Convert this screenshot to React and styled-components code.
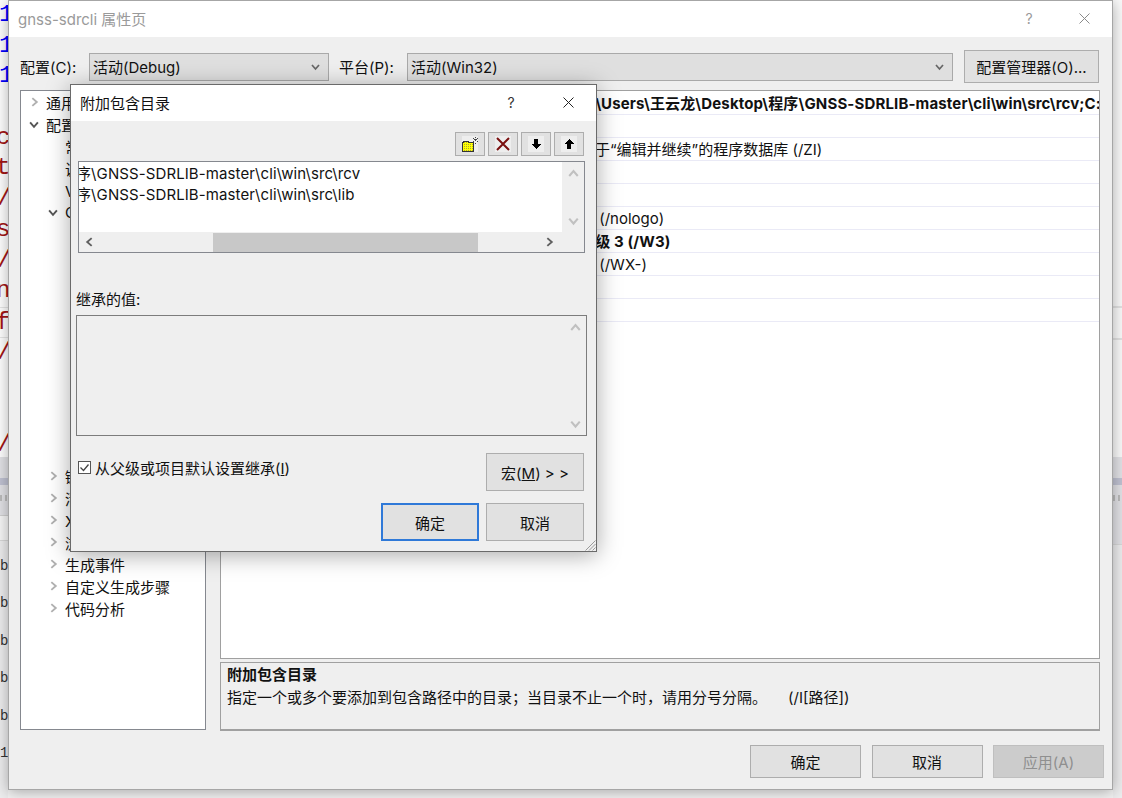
import styled, { createGlobalStyle } from "styled-components";

const GlobalStyle = createGlobalStyle`
  html, body {
    margin: 0;
    padding: 0;
    background: #f4f4f4;
  }
  body {
    font-family: Inter, "Noto Sans CJK SC", sans-serif;
    font-size: 15px;
    color: #111;
  }
`;

const Desktop = styled.div`
  position: relative;
  width: 1122px;
  height: 798px;
  overflow: hidden;
  display: flex;
  justify-content: space-between;
`;

const Strip = styled.div`
  width: ${(p) => p.$width}px;
  overflow: hidden;
  display: flex;
  flex-direction: column;
  background: #ececee;
`;

const CodePane = styled.div`
  height: 457px;
  flex: none;
  background: #fff;
  font-family: "Liberation Mono", monospace;
  font-size: 24px;
`;

const CodeLine = styled.div`
  height: 30.7px;
  line-height: 30.7px;
  margin-left: ${(p) => p.$shift}px;
  color: ${(p) => p.$color};
  box-sizing: border-box;
  ${(p) => p.$current && "border-top: 1px solid #e6e6e6; border-bottom: 1px solid #e6e6e6;"}
`;

const RightPane = styled.div`
  height: 457px;
  flex: none;
  background: #fafafa;
  padding-top: 306px;
  box-sizing: border-box;
`;

const CurrentLine = styled.div`
  height: 30px;
  border-top: 2px solid #e2e2e2;
  border-bottom: 2px solid #e2e2e2;
`;

const Splitter = styled.div`
  height: ${(p) => p.$height}px;
  flex: none;
  background: #e2e2e6;
  display: flex;
  flex-direction: column;
  padding-top: 21px;
  box-sizing: border-box;
`;

const SplitterBand = styled.div`
  height: 7px;
  background: #c0c2d2;
`;

const SplitterDots = styled.div`
  height: 6px;
  margin-top: 10px;
  background: repeating-linear-gradient(90deg, #bbb 0 2px, transparent 2px 5px);
`;

const PanelHeader = styled.div`
  height: 24px;
  flex: none;
  background: #f7f7f7;
  border-top: 1px solid #d0d0d0;
`;

const OutputPane = styled.div`
  flex: 1;
  padding-top: 7px;
  background: #ededee;
  border-top: 1px solid #d8d8d8;
  font-family: "Liberation Mono", monospace;
  font-size: 14px;
  color: #333;
`;

const OutputLine = styled.div`
  height: 37.4px;
  line-height: 37.4px;
  white-space: nowrap;
`;

const Window = styled.section`
  position: absolute;
  left: ${(p) => p.$left}px;
  top: ${(p) => p.$top}px;
  width: ${(p) => p.$width}px;
  height: ${(p) => p.$height}px;
  box-sizing: border-box;
  display: flex;
  flex-direction: column;
  background: #efefef;
  border: 1px solid ${(p) => p.$border};
  box-shadow: ${(p) => p.$shadow};
`;

const TitleBar = styled.header`
  height: ${(p) => p.$height}px;
  flex: none;
  box-sizing: border-box;
  background: #fff;
  display: flex;
  align-items: center;
  padding: 0 0 2px ${(p) => p.$pad}px;
  color: ${(p) => p.$color};
`;

const TitleText = styled.span`
  flex: 1;
`;

const HelpMark = styled.span`
  width: ${(p) => p.$width}px;
  text-align: center;
  font-size: 14px;
  color: ${(p) => p.$color};
`;

const CloseMark = styled.svg`
  width: 11px;
  height: 11px;
  margin: ${(p) => p.$margin};
  stroke: ${(p) => p.$color};
  stroke-width: 1;
  fill: none;
`;

const MainBody = styled.div`
  flex: 1;
  padding: 13px 12px 0 11px;
  display: flex;
  flex-direction: column;
`;

const ConfigRow = styled.div`
  height: 33px;
  flex: none;
  display: flex;
  align-items: center;
`;

const ConfigLabel = styled.span`
  width: ${(p) => p.$width}px;
  flex: none;
`;

const Combo = styled.div`
  width: ${(p) => p.$width}px;
  height: 28px;
  flex: none;
  box-sizing: border-box;
  margin-right: 10px;
  padding: 0 8px 0 3px;
  display: flex;
  align-items: center;
  justify-content: space-between;
  background: #dfdfdf;
  border: 1px solid #a9a9a9;
`;

const Button = styled.button`
  width: ${(p) => p.$width}px;
  height: ${(p) => p.$height}px;
  flex: none;
  box-sizing: border-box;
  padding: 0;
  font: inherit;
  color: ${(p) => (p.$disabled ? "#8f8f8f" : "#111")};
  background: ${(p) => (p.$disabled ? "#cccccc" : "#e1e1e1")};
  border: ${(p) => (p.$primary ? "2px solid #2f79d8" : p.$disabled ? "1px solid #bfbfbf" : "1px solid #adadad")};
  outline: none;
`;

const ManagerButton = styled(Button)`
  margin-left: auto;
  margin-right: 1px;
`;

const Content = styled.div`
  height: 640px;
  flex: none;
  margin-top: 7px;
  display: flex;
  gap: 14px;
`;

const TreePanel = styled.nav`
  width: 186px;
  flex: none;
  box-sizing: border-box;
  background: #fff;
  border: 1px solid #85888f;
  overflow: hidden;
`;

const TreeRow = styled.div`
  height: 22px;
  display: flex;
  align-items: center;
  white-space: nowrap;
  padding-left: ${(p) => p.$indent}px;
`;

const TreeArrow = styled.span`
  width: 12px;
  flex: none;
  margin-right: 6px;
  display: flex;
  justify-content: center;
`;

const RightColumn = styled.div`
  flex: 1;
  display: flex;
  flex-direction: column;
  gap: 3px;
  min-width: 0;
`;

const PropertyGrid = styled.div`
  height: 569px;
  flex: none;
  box-sizing: border-box;
  padding-top: 1px;
  background: #fff;
  border: 1px solid #a0a0a0;
  overflow: hidden;
`;

const PropertyRow = styled.div`
  height: 23px;
  box-sizing: border-box;
  padding: 0 0 2px 359px;
  display: flex;
  align-items: center;
  white-space: nowrap;
  overflow: hidden;
  border-bottom: 1px solid #eaeaf6;
  font-weight: ${(p) => (p.$bold ? 700 : 400)};
  letter-spacing: ${(p) => (p.$bold ? "0.14px" : "0")};
`;

const Description = styled.div`
  height: 69px;
  flex: none;
  box-sizing: border-box;
  padding: 0 6px;
  border: 1px solid #a0a0a0;
  border-bottom-width: 2px;
`;

const DescriptionTitle = styled.div`
  font-weight: 700;
  height: 23px;
  line-height: 23px;
`;

const DescriptionText = styled.div`
  height: 23px;
  line-height: 23px;
  white-space: pre;
`;

const Footer = styled.div`
  display: flex;
  justify-content: flex-end;
  gap: ${(p) => p.$gap}px;
  margin: ${(p) => p.$margin};
`;

const DialogBody = styled.div`
  flex: 1;
  padding: 11px 11px 0 7px;
  display: flex;
  flex-direction: column;
`;

const IconBar = styled.div`
  display: flex;
  justify-content: flex-end;
  gap: 3px;
  margin-right: 1px;
`;

const IconButton = styled.button`
  width: 30px;
  height: 24px;
  padding: 0;
  box-sizing: border-box;
  display: flex;
  align-items: center;
  justify-content: center;
  background: #e1e1e1;
  border: 1px solid #adadad;
`;

const IconFace = styled.svg`
  width: 16px;
  height: 16px;
  background: #eeeeee;
  shape-rendering: ${(p) => (p.$smooth ? "auto" : "crispEdges")};
`;

const ListBox = styled.div`
  height: 92px;
  flex: none;
  margin-top: 5px;
  box-sizing: border-box;
  display: grid;
  grid-template-columns: 1fr 22px;
  grid-template-rows: 1fr 20px;
  border: 1px solid #85888f;
  background: #efefef;
`;

const ListItems = styled.div`
  background: #fff;
  overflow: hidden;
  padding-top: 1px;
`;

const ListItem = styled.div`
  height: 21px;
  line-height: 21px;
  white-space: nowrap;
  margin-left: -3px;
  letter-spacing: 0.1px;
`;

const VerticalBar = styled.div`
  display: flex;
  flex-direction: column;
  align-items: center;
  justify-content: space-between;
  padding: ${(p) => p.$pad};
  background: #efefef;
`;

const HorizontalBar = styled.div`
  display: flex;
  align-items: center;
  background: #efefef;
  padding: 0 8px 0 6px;
`;

const Thumb = styled.div`
  width: 265px;
  height: 19px;
  margin-left: 118px;
  margin-right: auto;
  background: #c8c8c8;
`;

const FieldLabel = styled.div`
  height: 20px;
  line-height: 20px;
  margin: 37px 0 5px -2px;
`;

const InheritedBox = styled.div`
  height: 121px;
  flex: none;
  width: 511px;
  margin-left: -2px;
  box-sizing: border-box;
  display: flex;
  justify-content: flex-end;
  border: 1px solid #7c7c7c;
`;

const InheritedBar = styled(VerticalBar)`
  width: 22px;
  box-sizing: border-box;
`;

const OptionRow = styled.div`
  margin-top: 17px;
  display: flex;
  justify-content: space-between;
  align-items: flex-start;
  margin-right: 1px;
`;

const CheckLabel = styled.label`
  height: 28px;
  display: flex;
  align-items: center;
  gap: 4px;
`;

const CheckBox = styled.span`
  width: 13px;
  height: 13px;
  box-sizing: border-box;
  display: flex;
  background: #fff;
  border: 1px solid #555;
`;

const Underlined = styled.span`
  text-decoration: underline;
`;

const Grip = styled.svg`
  position: absolute;
  right: 0;
  bottom: 0;
  width: 12px;
  height: 12px;
  stroke: #9a9a9a;
  stroke-width: 1;
`;

const Chevron = ({ dir, color, size = 9 }) => {
  const paths = {
    right: "M3 1l4 3.5L3 8",
    left: "M6 1L2 4.5 6 8",
    down: "M1 3l3.5 4L8 3",
    up: "M1 6.5L4.5 2.5 8 6.5",
  };
  return (
    <svg width={size} height={size} viewBox="0 0 9 9" fill="none" stroke={color} strokeWidth="1.7">
      <path d={paths[dir]} />
    </svg>
  );
};

const Close = ({ color, margin }) => (
  <CloseMark viewBox="0 0 11 11" $color={color} $margin={margin}>
    <path d="M.5.5l10 10M10.5.5l-10 10" />
  </CloseMark>
);

const NewFolderIcon = () => (
  <IconFace viewBox="0 0 16 16">
    <defs>
      <pattern id="dither" width="2" height="2" patternUnits="userSpaceOnUse">
        <rect width="2" height="2" fill="#ffff00" />
        <rect width="1" height="1" fill="#a8a830" />
      </pattern>
    </defs>
    <path d="M.5 6.500h1v-1h5v1h5v8.500H.5z" fill="url(#dither)" stroke="#333" />
    <path d="M13 1h1v1h-1zM11 2h1v1h-1zM15 2h1v1h-1zM13 4h1v1h-1zM11 5h1v1h-1zM15 5h1v1h-1zM13 7h1v1h-1zM12 3h3v1h-3z" fill="#444" />
  </IconFace>
);

const DeleteIcon = () => (
  <IconFace viewBox="0 0 16 16" $smooth>
    <path d="M2 2l12 12M14 2L2 14" stroke="#7a1010" strokeWidth="2" />
  </IconFace>
);

const ArrowIcon = ({ up }) => (
  <IconFace viewBox="0 0 16 16">
    <path d={up ? "M8 3l5 5h-3v5H6V8H3z" : "M6 3h4v5h3l-5 5-5-5h3z"} fill="#000" />
  </IconFace>
);

const codeLines = [
  ["1", "#0000ff", -1],
  ["1", "#0000ff", -1],
  ["1", "#0000ff", -1],
  ["", "#000", 0],
  ["c", "#a31515", -4],
  ["t", "#a31515", -4],
  ["/", "#a31515", -3],
  ["s", "#a31515", -4],
  ["/", "#a31515", -3],
  ["n", "#a31515", -4],
  ["f", "#a31515", -4, true],
  ["/", "#a31515", -3],
  ["", "#000", 0],
  ["", "#000", 0],
  ["/", "#a31515", -3],
];

// rows with no label are covered by the dialog in the picture
const treeRows = [
  { label: "通用属性", indent: 7, arrow: "right" },
  { label: "配置属性", indent: 7, arrow: "down" },
  { label: "常规", indent: 44 },
  { label: "调试", indent: 44 },
  { label: "VC++ 目录", indent: 44 },
  { label: "C/C++", indent: 26, arrow: "down" },
  ...Array.from({ length: 11 }, () => ({ label: "", indent: 0 })),
  { label: "链接器", indent: 26, arrow: "right" },
  { label: "清单工具", indent: 26, arrow: "right" },
  { label: "XML 文档生成器", indent: 26, arrow: "right" },
  { label: "浏览信息", indent: 26, arrow: "right" },
  { label: "生成事件", indent: 26, arrow: "right" },
  { label: "自定义生成步骤", indent: 26, arrow: "right" },
  { label: "代码分析", indent: 26, arrow: "right" },
];

const properties = [
  { value: "C:\\Users\\王云龙\\Desktop\\程序\\GNSS-SDRLIB-master\\cli\\win\\src\\rcv;C:\\Users\\王云龙\\Desktop\\程序", bold: true },
  { value: "" },
  { value: "用于“编辑并继续”的程序数据库 (/ZI)" },
  { value: "" },
  { value: "" },
  { value: "是 (/nologo)" },
  { value: "等级 3 (/W3)", bold: true },
  { value: "否 (/WX-)" },
  { value: "" },
  { value: "" },
];

const App = () => {
  return (
    <Desktop>
      <GlobalStyle />
      <Strip $width={8}>
        <CodePane>
          {codeLines.map(([text, color, shift, current], i) => (
            <CodeLine key={i} $color={color} $shift={shift} $current={current}>
              {text}
            </CodeLine>
          ))}
        </CodePane>
        <Splitter $height={58}>
          <SplitterBand />
          <SplitterDots />
        </Splitter>
        <PanelHeader />
        <OutputPane>
          {["b-", "b-", "b-", "b-", "b-", "1"].map((t, i) => (
            <OutputLine key={i}>{t}</OutputLine>
          ))}
        </OutputPane>
      </Strip>
      <Strip $width={9}>
        <RightPane>
          <CurrentLine />
        </RightPane>
        <Splitter $height={87}>
          <SplitterBand />
          <SplitterDots />
        </Splitter>
        <OutputPane />
      </Strip>

      <Window $left={8} $top={0} $width={1105} $height={790} $border="#a6a6a6" $shadow="0 2px 14px rgba(0,0,0,0.32)">
        <TitleBar $height={36} $pad={9} $color="#9a9a9a">
          <TitleText>gnss-sdrcli 属性页</TitleText>
          <HelpMark $width={16} $color="#9a9a9a">?</HelpMark>
          <Close color="#8a8a8a" margin="0 22px 0 42px" />
        </TitleBar>
        <MainBody>
          <ConfigRow>
            <ConfigLabel $width={69}>配置(C):</ConfigLabel>
            <Combo $width={240}>
              活动(Debug)
              <Chevron dir="down" color="#666" />
            </Combo>
            <ConfigLabel $width={68}>平台(P):</ConfigLabel>
            <Combo $width={546}>
              活动(Win32)
              <Chevron dir="down" color="#666" />
            </Combo>
            <ManagerButton $width={135} $height={33}>配置管理器(O)...</ManagerButton>
          </ConfigRow>
          <Content>
            <TreePanel>
              {treeRows.map((row, i) => (
                <TreeRow key={i} $indent={row.indent}>
                  {row.arrow ? (
                    <TreeArrow>
                      <Chevron dir={row.arrow} color={row.arrow === "down" ? "#555" : "#b0b0b0"} size={10} />
                    </TreeArrow>
                  ) : null}
                  {row.label}
                </TreeRow>
              ))}
            </TreePanel>
            <RightColumn>
              <PropertyGrid>
                {properties.map((p, i) => (
                  <PropertyRow key={i} $bold={p.bold}>
                    {p.value}
                  </PropertyRow>
                ))}
              </PropertyGrid>
              <Description>
                <DescriptionTitle>附加包含目录</DescriptionTitle>
                <DescriptionText>指定一个或多个要添加到包含路径中的目录；当目录不止一个时，请用分号分隔。     (/I[路径])</DescriptionText>
              </Description>
            </RightColumn>
          </Content>
          <Footer $gap={10.5} $margin="15px -4px 0 0">
            <Button $width={111} $height={33}>确定</Button>
            <Button $width={111} $height={33}>取消</Button>
            <Button $width={111} $height={33} $disabled>应用(A)</Button>
          </Footer>
        </MainBody>
      </Window>

      <Window $left={70} $top={84} $width={527} $height={468} $border="#6a6a6a" $shadow="0 3px 22px rgba(0,0,0,0.34)">
        <TitleBar $height={36} $pad={9} $color="#111">
          <TitleText>附加包含目录</TitleText>
          <HelpMark $width={14} $color="#333">?</HelpMark>
          <Close color="#222" margin="0 22px 0 45px" />
        </TitleBar>
        <DialogBody>
          <IconBar>
            <IconButton><NewFolderIcon /></IconButton>
            <IconButton><DeleteIcon /></IconButton>
            <IconButton><ArrowIcon /></IconButton>
            <IconButton><ArrowIcon up /></IconButton>
          </IconBar>
          <ListBox>
            <ListItems>
              <ListItem>序\GNSS-SDRLIB-master\cli\win\src\rcv</ListItem>
              <ListItem>序\GNSS-SDRLIB-master\cli\win\src\lib</ListItem>
            </ListItems>
            <VerticalBar $pad="6px 0 6px">
              <Chevron dir="up" color="#c0c0c0" size={11} />
              <Chevron dir="down" color="#c0c0c0" size={11} />
            </VerticalBar>
            <HorizontalBar>
              <Chevron dir="left" color="#606060" size={10} />
              <Thumb />
              <Chevron dir="right" color="#606060" size={10} />
            </HorizontalBar>
            <div />
          </ListBox>
          <FieldLabel>继承的值:</FieldLabel>
          <InheritedBox>
            <InheritedBar $pad="6px 0 6px">
              <Chevron dir="up" color="#c0c0c0" size={11} />
              <Chevron dir="down" color="#c0c0c0" size={11} />
            </InheritedBar>
          </InheritedBox>
          <OptionRow>
            <CheckLabel>
              <CheckBox>
                <svg width="11" height="11" viewBox="0 0 11 11" fill="none" stroke="#444" strokeWidth="1.3">
                  <path d="M1.500 5.500l3 3 5-6" />
                </svg>
              </CheckBox>
              <span>从父级或项目默认设置继承(<Underlined>I</Underlined>)</span>
            </CheckLabel>
            <Button $width={98} $height={38}>宏(<Underlined>M</Underlined>) &gt; &gt;</Button>
          </OptionRow>
          <Footer $gap={7} $margin="12px 1px 0 0">
            <Button $width={98} $height={38} $primary>确定</Button>
            <Button $width={98} $height={38}>取消</Button>
          </Footer>
        </DialogBody>
        <Grip viewBox="0 0 12 12">
          <path d="M11.500 1.500l-10 10M11.500 5l-6.500 6.500M11.500 8.500l-3 3" />
        </Grip>
      </Window>
    </Desktop>
  );
};

export default App;
